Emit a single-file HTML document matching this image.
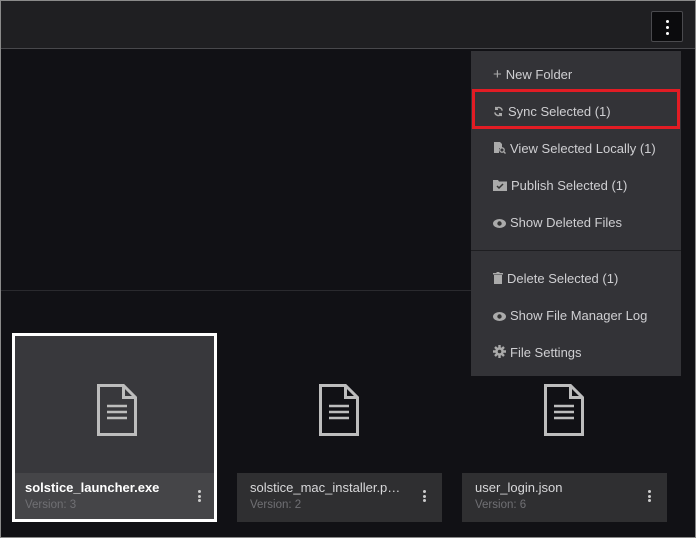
<!DOCTYPE html>
<html><head><style>
*{margin:0;padding:0;box-sizing:border-box}
body{width:696px;height:538px;background:#111115;font-family:"Liberation Sans",sans-serif;position:relative;overflow:hidden}
.frame{position:absolute;left:0;top:0;width:696px;height:538px;border:1px solid #8a8a8a;}
.top{position:absolute;left:1px;top:1px;width:694px;height:48px;background:#1f1f22;border-bottom:1px solid #48484c}
.kb{position:absolute;left:650px;top:10px;width:32px;height:31px;background:#0b0b0d;border:1px solid #4a4a4e;border-radius:2px}
.dot{position:absolute;left:14px;width:3px;height:3px;background:#fff;border-radius:50%}
.line2{position:absolute;left:1px;top:290px;width:470px;height:1px;background:#2a2a2e}
.menu{position:absolute;left:471px;top:51px;width:210px;height:325px;background:#333337}
.item{position:absolute;left:22px;color:#cfcfd2;font-size:13px;height:20px;line-height:20px;white-space:nowrap}
.item svg{vertical-align:-1px;margin-right:4px}
.sep{position:absolute;left:0;top:199px;width:210px;height:1px;background:#1e1e21}
.red{position:absolute;left:1px;top:38px;width:208px;height:40px;border:3px solid #e21c24}
.card{position:absolute;top:333px;width:205px;height:189px}
.foot{position:absolute;left:0;bottom:0;width:100%;height:49px;padding:7px 0 0 13px}
.name{font-size:13px;color:#d8d8da;white-space:nowrap}
.ver{font-size:11.5px;color:#707074;margin-top:4px}
.vd{position:absolute;right:16px;top:17px}
.vd i{display:block;width:3px;height:3px;background:#ccc;border-radius:50%;margin-bottom:1.5px}
.ico{position:absolute;left:82px;top:48px}
</style></head><body>
<div class="top"><div class="kb"><div class="dot" style="top:8px"></div><div class="dot" style="top:14px"></div><div class="dot" style="top:20px"></div></div></div>
<div class="line2"></div>
<div class="menu">
<div class="item" style="top:14px"><span style="font-size:15px;color:#aaa;margin-right:4px">+</span>New Folder</div>
<div class="red"></div>
<div class="item" style="top:51px"><svg width="11" height="11" viewBox="0 0 12 12" fill="none" stroke="#aaa" stroke-width="1.6"><path d="M10 5A4 4 0 0 0 3 3M2 7a4 4 0 0 0 7 2"/><path d="M3 1v2.5h2.5M9 11V8.5H6.5" /></svg>Sync Selected (1)</div>
<div class="item" style="top:88px"><svg width="13" height="13" viewBox="0 0 13 13"><path d="M1 1h6l2 2v4H1z" fill="#aaa"/><path d="M1 7h5v5H1z" fill="#aaa"/><circle cx="9" cy="9" r="2.2" stroke="#aaa" fill="none" stroke-width="1.3"/><path d="M10.5 10.5l2 2" stroke="#aaa" stroke-width="1.3"/></svg>View Selected Locally (1)</div>
<div class="item" style="top:125px"><svg width="14" height="12" viewBox="0 0 14 12"><path d="M0 1h5l1 1.5h8V12H0z" fill="#aaa"/><path d="M4 7l2 2 4-4" stroke="#333" stroke-width="1.5" fill="none"/></svg>Publish Selected (1)</div>
<div class="item" style="top:162px"><svg width="13" height="9" viewBox="0 0 13 9"><ellipse cx="6.5" cy="4.5" rx="6.5" ry="4.5" fill="#aaa"/><circle cx="6.5" cy="4.5" r="2.2" fill="#333"/></svg>Show Deleted Files</div>
<div class="sep"></div>
<div class="item" style="top:218px"><svg width="10" height="12" viewBox="0 0 10 12"><path d="M0 1h10v1.5H0zM3.5 0h3v1.5h-3zM1 3h8v9H1z" fill="#aaa"/></svg>Delete Selected (1)</div>
<div class="item" style="top:255px"><svg width="13" height="9" viewBox="0 0 13 9"><ellipse cx="6.5" cy="4.5" rx="6.5" ry="4.5" fill="#aaa"/><circle cx="6.5" cy="4.5" r="2.2" fill="#333"/></svg>Show File Manager Log</div>
<div class="item" style="top:292px"><svg width="13" height="13" viewBox="0 0 13 13"><circle cx="6.5" cy="6.5" r="4.2" fill="#aaa"/><g stroke="#aaa" stroke-width="2.4"><path d="M6.5 0v13M0 6.5h13M2 2l9 9M11 2l-9 9"/></g><circle cx="6.5" cy="6.5" r="1.8" fill="#333"/></svg>File Settings</div>
</div>

<div class="card" style="left:12px;background:#38383c;border:3px solid #fff">
<svg class="ico" width="40" height="52" viewBox="0 0 40 52" fill="none" stroke="#bdbdbd" stroke-width="3"><path d="M1.5 1.5h25l12 12v37h-37z"/><path d="M26.5 1.5v12h12" /><path d="M10 22h20M10 28h20M10 34h20" stroke-width="2.6"/></svg>
<div class="foot" style="background:#454548;height:46px;padding:7px 0 0 10px"><div class="name" style="color:#fff;font-weight:bold">solstice_launcher.exe</div><div class="ver">Version: 3</div><div class="vd" style="right:13px"><i></i><i></i><i></i></div></div>
</div>
<div class="card" style="left:237px">
<svg class="ico" width="40" height="52" viewBox="0 0 40 52" fill="none" stroke="#bdbdbd" stroke-width="3" style="left:82px;top:51px"><path d="M1.5 1.5h25l12 12v37h-37z"/><path d="M26.5 1.5v12h12" /><path d="M10 22h20M10 28h20M10 34h20" stroke-width="2.6"/></svg>
<div class="foot" style="background:#2f2f31"><div class="name">solstice_mac_installer.p…</div><div class="ver">Version: 2</div><div class="vd"><i></i><i></i><i></i></div></div>
</div>
<div class="card" style="left:462px">
<svg class="ico" width="40" height="52" viewBox="0 0 40 52" fill="none" stroke="#bdbdbd" stroke-width="3" style="left:82px;top:51px"><path d="M1.5 1.5h25l12 12v37h-37z"/><path d="M26.5 1.5v12h12" /><path d="M10 22h20M10 28h20M10 34h20" stroke-width="2.6"/></svg>
<div class="foot" style="background:#2f2f31"><div class="name">user_login.json</div><div class="ver">Version: 6</div><div class="vd"><i></i><i></i><i></i></div></div>
</div>
<div class="frame"></div>
</body></html>
